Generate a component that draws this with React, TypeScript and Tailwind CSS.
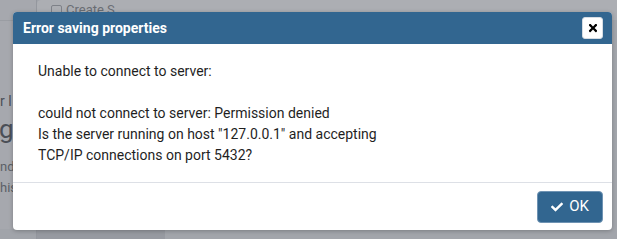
import { FaCheck, FaTimes } from "react-icons/fa";

const font = { fontFamily: "Roboto, 'Liberation Sans', sans-serif" };

function Backdrop() {
  return (
    <div className="flex h-full w-full bg-[#9fa2a9]">
      <div className="flex w-[37px] shrink-0 flex-col border-r border-[#94979e] bg-[#a6a8ae] text-[#4b4f57]">
        <div className="h-[21px] border-b border-[#9a9da3]" />
        <div className="mt-[70px] whitespace-nowrap text-[14px] leading-[20px]">r l</div>
        <div className="mt-[4px] whitespace-nowrap text-[26px] leading-[28px] -ml-[1px]">gr</div>
        <div className="mt-[14px] whitespace-nowrap text-[13px] leading-[20px] text-[#5b5f66]">nd</div>
        <div className="mt-[1px] whitespace-nowrap text-[13px] leading-[20px] text-[#5b5f66]">his</div>
        <div className="mt-auto h-[10px] bg-[#a1a4aa]" />
      </div>
      <div className="flex flex-1 flex-col">
        <div className="flex h-[20px] items-center gap-1 rounded-tl-[4px] bg-[#acaeb3] pl-[14px] text-[13px] text-[#6a6d73]">
          <span className="inline-block h-[11px] w-[11px] rounded-[2px] border border-[#7e8188]" />
          <span>Create S</span>
        </div>
        <div className="flex-1 bg-[#a3a6ac]" />
        <div className="flex h-[9px]">
          <div className="w-[128px] bg-[#979aa1]" />
          <div className="flex-1 bg-[#a2a5ab]" />
        </div>
      </div>
    </div>
  );
}

export default function App() {
  return (
    <div className="relative h-[239px] w-[617px] overflow-hidden" style={font}>
      <Backdrop />
      <div className="absolute left-[13px] top-[12px] flex h-[218px] w-[599px] flex-col overflow-hidden rounded-[4px] bg-white shadow-[0_1px_4px_rgba(0,0,0,0.25)]">
        <div className="flex h-[32px] items-center justify-between bg-[#326690] pl-[10px] pr-[9px]">
          <span className="text-[14px] font-bold text-white">Error saving properties</span>
          <button className="flex h-[22px] w-[21px] items-center justify-center rounded-[3px] border border-[#d6dde4] bg-white">
            <FaTimes size={12} className="text-black" />
          </button>
        </div>
        <div className="flex-1 px-[25px] pt-[17px] text-[14px] leading-[21px] text-[#1f1f1f]">
          <div>Unable to connect to server:</div>
          <div className="h-[21px]" />
          <div>could not connect to server: Permission denied</div>
          <div>Is the server running on host "127.0.0.1" and accepting</div>
          <div>TCP/IP connections on port 5432?</div>
        </div>
        <div className="flex h-[48px] items-center justify-end border-t border-[#dde0e6] pr-[9px]">
          <button className="flex h-[32px] w-[66px] items-center justify-center gap-[6px] rounded-[4px] border border-[#6f93b3] bg-[#326690] text-[15px] text-white">
            <FaCheck size={12} />
            <span>OK</span>
          </button>
        </div>
      </div>
    </div>
  );
}
